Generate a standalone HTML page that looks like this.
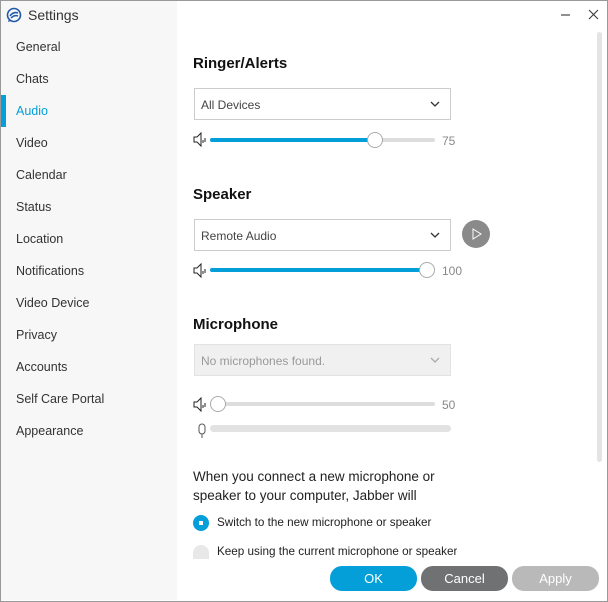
<!DOCTYPE html>
<html><head><style>
*{margin:0;padding:0;box-sizing:border-box}
body{width:608px;height:602px;overflow:hidden;background:#fff;font-family:"Liberation Sans",sans-serif;position:relative;color:#222}
.win{position:absolute;left:0;top:0;width:608px;height:602px;border:1px solid #999}
.side{position:absolute;left:1px;top:1px;width:176px;height:599px;background:#f7f7f7}
.a{position:absolute;white-space:nowrap}
.nav{position:absolute;left:16px;font-size:12.5px;color:#333}
.h{position:absolute;left:193px;font-size:15px;font-weight:bold;color:#111}
.dd{position:absolute;left:194px;width:257px;height:32px;border:1px solid #ccc;font-size:12px;color:#444;padding:9px 0 0 6px}
.dd svg{position:absolute;right:10px;top:12px}
.track{position:absolute;height:4px;background:#ddd;border-radius:2px}
.fill{position:absolute;height:4px;background:#049fd9;border-radius:2px}
.knob{position:absolute;width:16px;height:16px;border:1px solid #aaa;border-radius:50%;background:#fff}
.val{position:absolute;font-size:12px;color:#888}
.btn{position:absolute;top:566px;height:25px;width:87px;border-radius:12px;color:#fff;font-size:13px;text-align:center;line-height:25px}
</style></head><body>
<div class="win"></div>
<div class="side"></div>
<svg class="a" style="left:6px;top:7px" width="16" height="16" viewBox="0 0 16 16"><circle cx="8" cy="8" r="6.5" fill="none" stroke="#1e5aa8" stroke-width="1.6"/><path d="M4 9c2-3 5-4 8-3M5 11c2-2 4-3 7-2" stroke="#1e5aa8" stroke-width="1.5" fill="none"/><path d="M3 12l-1 3 3-1" fill="#1e5aa8"/></svg>
<div class="a" style="left:28px;top:7px;font-size:14px;color:#333">Settings</div>
<svg class="a" style="left:560px;top:9px" width="40" height="12"><line x1="1" y1="6" x2="10" y2="6" stroke="#222"/><path d="M29 1l9 9M38 1l-9 9" stroke="#333"/></svg>
<div class="nav" style="top:40px">General</div>
<div class="nav" style="top:72px">Chats</div>
<div class="a" style="left:1px;top:95px;width:5px;height:32px;background:#049fd9"></div>
<div class="nav" style="top:104px;color:#049fd9">Audio</div>
<div class="nav" style="top:136px">Video</div>
<div class="nav" style="top:168px">Calendar</div>
<div class="nav" style="top:200px">Status</div>
<div class="nav" style="top:232px">Location</div>
<div class="nav" style="top:264px">Notifications</div>
<div class="nav" style="top:296px">Video Device</div>
<div class="nav" style="top:328px">Privacy</div>
<div class="nav" style="top:360px">Accounts</div>
<div class="nav" style="top:392px">Self Care Portal</div>
<div class="nav" style="top:424px">Appearance</div>
<div class="a" style="left:597px;top:32px;width:5px;height:430px;background:#e4e4e4;border-radius:3px"></div>

<div class="h" style="top:55px">Ringer/Alerts</div>
<div class="dd" style="top:88px">All Devices<svg width="10" height="6"><path d="M1 1l4 4 4-4" stroke="#333" fill="none" stroke-width="1.3"/></svg></div>
<svg class="a" style="left:193px;top:132px" width="16" height="15"><path d="M1 5h3l4-4v13l-4-4H1z" fill="none" stroke="#222"/><path d="M10 8v3M12 6v4" stroke="#222"/></svg>
<div class="track" style="left:210px;top:138px;width:225px"></div><div class="fill" style="left:210px;top:138px;width:165px"></div>
<div class="knob" style="left:367px;top:132px"></div><div class="val" style="left:442px;top:134px">75</div>

<div class="h" style="top:186px">Speaker</div>
<div class="dd" style="top:219px">Remote Audio<svg width="10" height="6"><path d="M1 1l4 4 4-4" stroke="#333" fill="none" stroke-width="1.3"/></svg></div>
<div class="a" style="left:462px;top:220px;width:28px;height:28px;border-radius:50%;background:#8a8a8a"></div>
<svg class="a" style="left:471px;top:228px" width="12" height="12"><path d="M2 1l8 5-8 5z" fill="none" stroke="#fff"/></svg>
<svg class="a" style="left:193px;top:263px" width="16" height="15"><path d="M1 5h3l4-4v13l-4-4H1z" fill="none" stroke="#222"/><path d="M10 8v3M12 6v4" stroke="#222"/></svg>
<div class="track" style="left:210px;top:268px;width:217px"></div><div class="fill" style="left:210px;top:268px;width:217px"></div>
<div class="knob" style="left:419px;top:262px"></div><div class="val" style="left:442px;top:264px">100</div>

<div class="h" style="top:316px">Microphone</div>
<div class="dd" style="top:344px;background:#f0f0f0;border-color:#e2e2e2;color:#999">No microphones found.<svg width="10" height="6"><path d="M1 1l4 4 4-4" stroke="#aaa" fill="none" stroke-width="1.3"/></svg></div>
<svg class="a" style="left:193px;top:397px" width="16" height="15"><path d="M1 5h3l4-4v13l-4-4H1z" fill="none" stroke="#222"/><path d="M10 8v3M12 6v4" stroke="#222"/></svg>
<div class="track" style="left:210px;top:402px;width:225px"></div>
<div class="knob" style="left:210px;top:396px"></div><div class="val" style="left:442px;top:398px">50</div>
<svg class="a" style="left:197px;top:423px" width="10" height="16"><rect x="2" y="1" width="6" height="10" rx="3" fill="none" stroke="#555"/><path d="M5 11v4" stroke="#555"/></svg>
<div class="a" style="left:210px;top:425px;width:241px;height:7px;background:#e2e2e2;border-radius:4px"></div>

<div class="a" style="left:193px;top:467px;font-size:13.5px;line-height:19px;color:#222">When you connect a new microphone or<br>speaker to your computer, Jabber will</div>
<div class="a" style="left:193px;top:515px;width:16px;height:16px;border-radius:50%;background:#049fd9"></div>
<div class="a" style="left:199px;top:521px;width:4px;height:4px;background:#fff"></div>
<div class="a" style="left:217px;top:516px;font-size:11.7px">Switch to the new microphone or speaker</div>
<div class="a" style="left:193px;top:545px;width:16px;height:14px;border-radius:8px 8px 0 0;background:#e8e8e8"></div>
<div class="a" style="left:217px;top:545px;font-size:11.7px;height:14px;overflow:hidden">Keep using the current microphone or speaker</div>
<div class="btn" style="left:330px;background:#049fd9">OK</div>
<div class="btn" style="left:421px;background:#6f7173">Cancel</div>
<div class="btn" style="left:512px;background:#b9b9b9">Apply</div>
</body></html>
